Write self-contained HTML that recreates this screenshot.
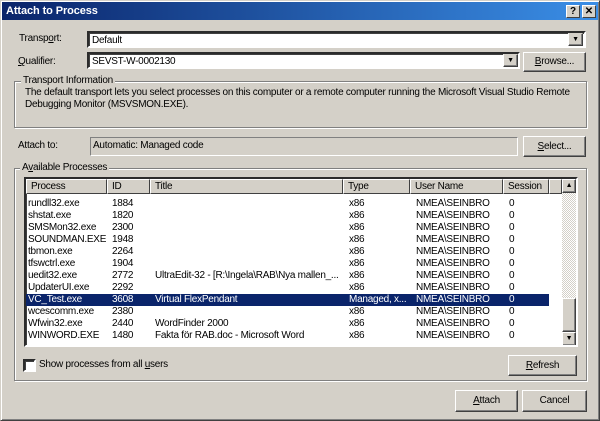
<!DOCTYPE html><html><head><style>
*{box-sizing:border-box}body{margin:0;width:600px;height:421px;background:#d4d0c8;font:10px "Liberation Sans",sans-serif;letter-spacing:-0.25px;color:#000;position:relative;overflow:hidden}
.a{position:absolute}
.win{position:absolute;left:0;top:0;width:600px;height:421px;border:1px solid;border-color:#d4d0c8 #404040 #404040 #d4d0c8;box-shadow:inset 1px 1px #fff,inset -1px -1px #808080}
.title{left:2px;top:2px;width:596px;height:18px;background:linear-gradient(90deg,#0a246a,#3a8ee6);color:#fff;font-weight:bold;font-size:11px;padding:3px 4px;letter-spacing:-0.1px}
.tb{width:14px;height:13px;background:#d4d0c8;border:1px solid;border-color:#fff #404040 #404040 #fff;font-weight:bold;font-size:10px;text-align:center;line-height:11px;color:#000;letter-spacing:0}
.sunk{border:2px inset #d4d0c8;border-color:#808080 #fff #fff #808080;box-shadow:inset 1px 1px #404040}
.btn{border:1px solid;border-color:#fff #404040 #404040 #fff;box-shadow:inset -1px -1px #808080;text-align:center;background:#d4d0c8}
.grp{border:1px solid #808080;box-shadow:1px 1px #fff,inset 1px 1px #fff}
.lg{background:#d4d0c8;padding:0 2px}
.dd{width:15px;background:#d4d0c8;border:1px solid;border-color:#d4d0c8 #404040 #404040 #fff;box-shadow:inset -1px -1px #808080;font-size:7px;text-align:center}
.row{position:absolute;left:0;width:523px;height:12px;line-height:12px}
.row span{position:absolute}
.sel{background:#0a246a;color:#fff}
.hd span{position:absolute;top:0;height:15px;line-height:13px;padding-left:4px;border:1px solid;border-color:#fff #404040 #404040 #fff;background:#d4d0c8}
</style></head><body>
<div class="win"></div>
<div class="a title">Attach to Process</div>
<div class="a tb" style="left:566px;top:5px">?</div><div class="a tb" style="left:582px;top:5px">✕</div>
<div class="a" style="left:19px;top:33px">Transp<u>o</u>rt:</div>
<div class="a sunk" style="left:87px;top:31px;width:499px;height:17px;background:#fff;padding:2px 3px">Default</div>
<div class="a dd" style="left:568px;top:33px;height:13px;line-height:11px">▼</div>
<div class="a" style="left:18px;top:56px"><u>Q</u>ualifier:</div>
<div class="a sunk" style="left:87px;top:52px;width:433px;height:17px;background:#fff;padding:2px 3px">SEVST-W-0002130</div>
<div class="a dd" style="left:503px;top:54px;height:13px;line-height:11px">▼</div>
<div class="a btn" style="left:523px;top:52px;width:63px;height:20px;line-height:18px"><u>B</u>rowse...</div>
<div class="a grp" style="left:14px;top:81px;width:573px;height:47px"></div>
<div class="a lg" style="left:21px;top:75px">Transport Information</div>
<div class="a" style="left:25px;top:87px;width:560px;line-height:12px">The default transport lets you select processes on this computer or a remote computer running the Microsoft Visual Studio Remote<br>Debugging Monitor (MSVSMON.EXE).</div>
<div class="a" style="left:18px;top:140px">Attach to:</div>
<div class="a" style="left:90px;top:137px;width:428px;height:19px;border:1px solid;border-color:#808080 #fff #fff #808080;padding:2px 2px">Automatic: Managed code</div>
<div class="a btn" style="left:523px;top:136px;width:63px;height:21px;line-height:19px"><u>S</u>elect...</div>
<div class="a grp" style="left:14px;top:168px;width:573px;height:213px"></div>
<div class="a lg" style="left:20px;top:162px">A<u>v</u>ailable Processes</div>
<div class="a sunk" style="left:24px;top:177px;width:554px;height:170px;background:#fff;overflow:hidden">
<div class="a hd" style="left:0;top:0;width:536px;height:15px">
<span style="left:0;width:81px">Process</span><span style="left:81px;width:43px">ID</span><span style="left:124px;width:193px">Title</span><span style="left:317px;width:67px">Type</span><span style="left:384px;width:93px">User Name</span><span style="left:477px;width:46px">Session</span><span style="left:523px;width:13px"></span></div>
<div class="a" style="left:536px;top:0;width:14px;height:166px;background:repeating-conic-gradient(#d4d0c8 0 25%,#fff 0 50%) 0 0/2px 2px"></div>
<div class="a btn" style="left:536px;top:0;width:14px;height:14px;font-size:7px;line-height:12px">▲</div>
<div class="a btn" style="left:536px;top:153px;width:14px;height:14px;font-size:7px;line-height:12px">▼</div>
<div class="a btn" style="left:536px;top:119px;width:14px;height:34px"></div>
<div style="position:absolute;left:0;top:19px">
<div class="row" style="top:0"><span style="left:2px">rundll32.exe</span><span style="left:86px">1884</span><span style="left:323px">x86</span><span style="left:390px">NMEA\SEINBRO</span><span style="left:483px">0</span></div>
<div class="row" style="top:12px"><span style="left:2px">shstat.exe</span><span style="left:86px">1820</span><span style="left:323px">x86</span><span style="left:390px">NMEA\SEINBRO</span><span style="left:483px">0</span></div>
<div class="row" style="top:24px"><span style="left:2px">SMSMon32.exe</span><span style="left:86px">2300</span><span style="left:323px">x86</span><span style="left:390px">NMEA\SEINBRO</span><span style="left:483px">0</span></div>
<div class="row" style="top:36px"><span style="left:2px">SOUNDMAN.EXE</span><span style="left:86px">1948</span><span style="left:323px">x86</span><span style="left:390px">NMEA\SEINBRO</span><span style="left:483px">0</span></div>
<div class="row" style="top:48px"><span style="left:2px">tbmon.exe</span><span style="left:86px">2264</span><span style="left:323px">x86</span><span style="left:390px">NMEA\SEINBRO</span><span style="left:483px">0</span></div>
<div class="row" style="top:60px"><span style="left:2px">tfswctrl.exe</span><span style="left:86px">1904</span><span style="left:323px">x86</span><span style="left:390px">NMEA\SEINBRO</span><span style="left:483px">0</span></div>
<div class="row" style="top:72px"><span style="left:2px">uedit32.exe</span><span style="left:86px">2772</span><span style="left:129px">UltraEdit-32 - [R:\Ingela\RAB\Nya mallen_...</span><span style="left:323px">x86</span><span style="left:390px">NMEA\SEINBRO</span><span style="left:483px">0</span></div>
<div class="row" style="top:84px"><span style="left:2px">UpdaterUI.exe</span><span style="left:86px">2292</span><span style="left:323px">x86</span><span style="left:390px">NMEA\SEINBRO</span><span style="left:483px">0</span></div>
<div class="row sel" style="top:96px"><span style="left:2px">VC_Test.exe</span><span style="left:86px">3608</span><span style="left:129px">Virtual FlexPendant</span><span style="left:323px">Managed, x...</span><span style="left:390px">NMEA\SEINBRO</span><span style="left:483px">0</span></div>
<div class="row" style="top:108px"><span style="left:2px">wcescomm.exe</span><span style="left:86px">2380</span><span style="left:323px">x86</span><span style="left:390px">NMEA\SEINBRO</span><span style="left:483px">0</span></div>
<div class="row" style="top:120px"><span style="left:2px">Wfwin32.exe</span><span style="left:86px">2440</span><span style="left:129px">WordFinder 2000</span><span style="left:323px">x86</span><span style="left:390px">NMEA\SEINBRO</span><span style="left:483px">0</span></div>
<div class="row" style="top:132px"><span style="left:2px">WINWORD.EXE</span><span style="left:86px">1480</span><span style="left:129px">Fakta för RAB.doc - Microsoft Word</span><span style="left:323px">x86</span><span style="left:390px">NMEA\SEINBRO</span><span style="left:483px">0</span></div>
</div></div>
<div class="a sunk" style="left:23px;top:359px;width:13px;height:13px;background:#fff"></div>
<div class="a" style="left:39px;top:359px">Show processes from all <u>u</u>sers</div>
<div class="a btn" style="left:508px;top:355px;width:69px;height:21px;line-height:19px"><u>R</u>efresh</div>
<div class="a btn" style="left:455px;top:390px;width:63px;height:22px;line-height:20px"><u>A</u>ttach</div>
<div class="a btn" style="left:522px;top:390px;width:65px;height:22px;line-height:20px">Cancel</div>
</body></html>
